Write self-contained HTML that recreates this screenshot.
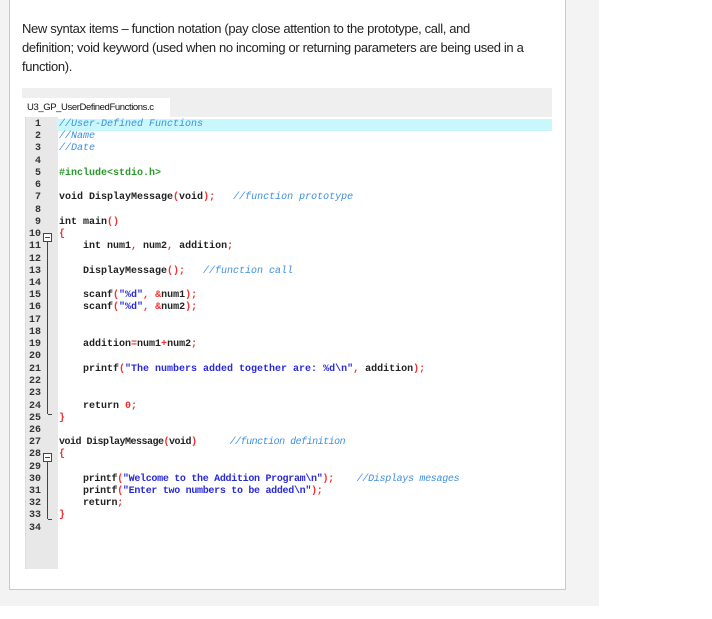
<!DOCTYPE html>
<html><head><meta charset="utf-8"><style>
body{margin:0;width:712px;height:619px;background:#fff;position:relative;overflow:hidden;font-family:"Liberation Sans",sans-serif}
.bg{position:absolute;left:0;top:0;width:599px;height:606px;background:#f3f3f3}
.card{position:absolute;left:9px;top:-2px;width:557px;height:592px;background:#fff;border:1px solid #c9c9c9;box-sizing:border-box}
.p{position:absolute;left:22px;top:19px;width:560px;font-size:13px;line-height:19px;color:#222;letter-spacing:-0.35px;white-space:nowrap}
.shot{position:absolute;left:22px;top:88px;width:530px;height:481px;background:#fff}
.hdr{position:absolute;left:0;top:0;width:530px;height:29px;background:#efefef}
.tab{position:absolute;left:0;top:10px;width:148px;height:20px;background:#fff;font-size:9.5px;line-height:20px;padding-left:5px;box-sizing:border-box;color:#111;letter-spacing:-0.4px}
.gut{position:absolute;left:3px;top:29px;width:32px;height:452px;background:#e8e8e8;border-left:1px solid #ddd}
.hl{position:absolute;left:35px;top:31px;width:495px;height:12px;background:#c8f8fb}
.sh{position:absolute;left:0;top:2px;width:530px;height:460px}
.l{position:absolute;font-family:"Liberation Mono",monospace;font-weight:bold;font-size:10px;line-height:12px;white-space:pre;color:#222}
.n{position:absolute;left:4px;width:15px;text-align:right;font-family:"Liberation Mono",monospace;font-weight:bold;font-size:10px;line-height:12px;color:#333}
.c{color:#3c8fe0;font-style:italic;font-weight:normal}
.r{color:#f03030}.b{color:#2a2ad8}.g{color:#2a9a2a}
.box{position:absolute;left:21px;width:9px;height:9px;border:1px solid #444;background:#fff;box-sizing:border-box}
.box:after{content:"";position:absolute;left:1px;top:3px;width:5px;height:1px;background:#444}
.vl{position:absolute;left:25px;width:1px;background:#444}
.hk{position:absolute;left:26px;width:4px;height:1px;background:#444}
</style></head><body>
<div class="bg"></div>
<div class="card"></div>
<div class="p">New syntax items – function notation (pay close attention to the prototype, call, and<br>definition; void keyword (used when no incoming or returning parameters are being used in a<br>function).</div>
<div class="shot">
<div class="hdr"></div>
<div class="tab">U3_GP_UserDefinedFunctions.c</div>
<div class="gut"></div>
<div class="hl"></div>
<div class="sh">
<div class="box" style="top:143px"></div><div class="vl" style="top:152px;height:172px"></div><div class="hk" style="top:324px"></div>
<div class="box" style="top:363px"></div><div class="vl" style="top:372px;height:57px"></div><div class="hk" style="top:429px"></div>

<div class="l c" style="left:37px;top:29px">//User-Defined Functions</div>
<div class="l c" style="left:37px;top:41px">//Name</div>
<div class="l c" style="left:37px;top:53px">//Date</div>
<div class="l g" style="left:37px;top:78px">#include&lt;stdio.h&gt;</div>
<div class="l" style="left:37px;top:102px">void DisplayMessage<span class="r">(</span>void<span class="r">);</span>   <span class="c">//function prototype</span></div>
<div class="l" style="left:37px;top:127px">int main<span class="r">()</span></div>
<div class="l r" style="left:37px;top:139px">{</div>
<div class="l" style="left:61px;top:151px">int num1<span class="r">,</span> num2<span class="r">,</span> addition<span class="r">;</span></div>
<div class="l" style="left:61px;top:176px">DisplayMessage<span class="r">();</span>   <span class="c">//function call</span></div>
<div class="l" style="left:61px;top:200px">scanf<span class="r">(</span><span class="b">"%d"</span><span class="r">,</span> <span class="r">&amp;</span>num1<span class="r">);</span></div>
<div class="l" style="left:61px;top:212px">scanf<span class="r">(</span><span class="b">"%d"</span><span class="r">,</span> <span class="r">&amp;</span>num2<span class="r">);</span></div>
<div class="l" style="left:61px;top:249px">addition<span class="r">=</span>num1<span class="r">+</span>num2<span class="r">;</span></div>
<div class="l" style="left:61px;top:274px">printf<span class="r">(</span><span class="b">"The numbers added together are: %d\n"</span><span class="r">,</span> addition<span class="r">);</span></div>
<div class="l" style="left:61px;top:311px">return <span class="r">0;</span></div>
<div class="l r" style="left:37px;top:323px">}</div>
<div class="l" style="left:37px;top:347px;letter-spacing:-0.5px">void DisplayMessage<span class="r">(</span>void<span class="r">)</span>      <span class="c">//function definition</span></div>
<div class="l r" style="left:37px;top:359px">{</div>
<div class="l" style="left:61px;top:384px;letter-spacing:-0.3px">printf<span class="r">(</span><span class="b">"Welcome to the Addition Program\n"</span><span class="r">);</span>    <span class="c">//Displays mesages</span></div>
<div class="l" style="left:61px;top:396px;letter-spacing:-0.3px">printf<span class="r">(</span><span class="b">"Enter two numbers to be added\n"</span><span class="r">);</span></div>
<div class="l" style="left:61px;top:408px;letter-spacing:-0.3px">return<span class="r">;</span></div>
<div class="l r" style="left:37px;top:420px">}</div>
<div class="n" style="top:29px">1</div><div class="n" style="top:41px">2</div><div class="n" style="top:53px">3</div><div class="n" style="top:66px">4</div><div class="n" style="top:78px">5</div><div class="n" style="top:90px">6</div><div class="n" style="top:102px">7</div><div class="n" style="top:115px">8</div><div class="n" style="top:127px">9</div><div class="n" style="top:139px">10</div><div class="n" style="top:151px">11</div><div class="n" style="top:164px">12</div><div class="n" style="top:176px">13</div><div class="n" style="top:188px">14</div><div class="n" style="top:200px">15</div><div class="n" style="top:212px">16</div><div class="n" style="top:225px">17</div><div class="n" style="top:237px">18</div><div class="n" style="top:249px">19</div><div class="n" style="top:261px">20</div><div class="n" style="top:274px">21</div><div class="n" style="top:286px">22</div><div class="n" style="top:298px">23</div><div class="n" style="top:311px">24</div><div class="n" style="top:323px">25</div><div class="n" style="top:335px">26</div><div class="n" style="top:347px">27</div><div class="n" style="top:359px">28</div><div class="n" style="top:372px">29</div><div class="n" style="top:384px">30</div><div class="n" style="top:396px">31</div><div class="n" style="top:408px">32</div><div class="n" style="top:420px">33</div><div class="n" style="top:433px">34</div>
</div>
</div>
</body></html>
